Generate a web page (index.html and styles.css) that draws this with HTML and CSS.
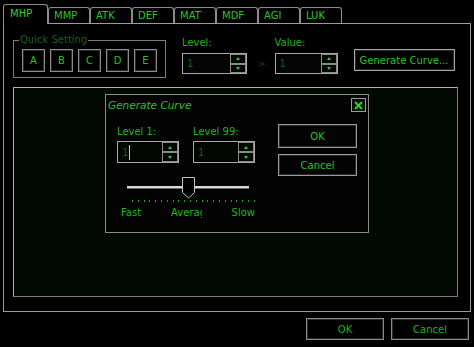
FILE: index.html
```html
<!DOCTYPE html>
<html>
<head>
  <meta name="viewport" content="width=device-width, initial-scale=1">
  <link rel="stylesheet" href="styles.css">
</head>
<body>
  <div class="tabs">
    <div class="tab active">MHP</div>
    <div class="tab">MMP</div>
    <div class="tab">ATK</div>
    <div class="tab">DEF</div>
    <div class="tab">MAT</div>
    <div class="tab">MDF</div>
    <div class="tab">AGI</div>
    <div class="tab">LUK</div>
  </div>

  <div class="panel">
    <div class="top-row">
      <div class="quick">
        <span class="quick-title">Quick Setting</span>
        <div class="btn sq">A</div>
        <div class="btn sq">B</div>
        <div class="btn sq">C</div>
        <div class="btn sq">D</div>
        <div class="btn sq">E</div>
      </div>

      <div class="field level-field">
        <label>Level:</label>
        <div class="spin">
          <span class="spin-val off">1</span>
          <div class="spin-btns"><span class="up"></span><span class="down"></span></div>
        </div>
      </div>

      <span class="arrow">&gt;</span>

      <div class="field value-field">
        <label>Value:</label>
        <div class="spin">
          <span class="spin-val off">1</span>
          <div class="spin-btns"><span class="up"></span><span class="down"></span></div>
        </div>
      </div>

      <div class="btn gen">Generate Curve...</div>
    </div>

    <div class="graph"></div>
  </div>

  <div class="footer">
    <div class="btn foot">OK</div>
    <div class="btn foot">Cancel</div>
  </div>

  <!-- modal dialog on top of the graph -->
  <div class="dialog">
    <div class="dlg-title">
      <span class="dlg-name">Generate Curve</span>
      <span class="close">
        <svg width="9" height="9" viewBox="0 0 9 9"><path d="M1 1 L8 8 M8 1 L1 8" stroke="#2bd42b" stroke-width="2"/></svg>
      </span>
    </div>
    <div class="dlg-body">
      <div class="dlg-left">
        <div class="dlg-fields">
          <div class="field">
            <label>Level 1:</label>
            <div class="spin">
              <span class="spin-val off">1<i class="caret"></i></span>
              <div class="spin-btns"><span class="up"></span><span class="down"></span></div>
            </div>
          </div>
          <div class="field">
            <label>Level 99:</label>
            <div class="spin">
              <span class="spin-val off">1</span>
              <div class="spin-btns"><span class="up"></span><span class="down"></span></div>
            </div>
          </div>
        </div>

        <div class="slider">
          <div class="track"></div>
          <svg class="handle" width="13" height="22" viewBox="0 0 13 22">
            <path d="M0.5 0.5 H12.5 V15.5 L6.5 21 L0.5 15.5 Z" fill="#000" stroke="#c4c4c4"/>
          </svg>
        </div>
        <div class="ticks"></div>
        <div class="speeds">
          <span class="fast">Fast</span>
          <span class="avg">Average</span>
          <span class="slow">Slow</span>
        </div>
      </div>

      <div class="dlg-btns">
        <div class="btn dlg-btn">OK</div>
        <div class="btn dlg-btn small">Cancel</div>
      </div>
    </div>
  </div>
</body>
</html>
```

FILE: styles.css
```css
body {
  margin: 0;
  background: #000;
  color: #25c425;
  font-family: "DejaVu Sans", Verdana, sans-serif;
  font-size: 10px;
  width: 474px;
  height: 347px;
  overflow: hidden;
  position: relative;
}

.tabs {
  display: flex;
  align-items: flex-end;
  height: 23px;
  padding-left: 3px;
  position: relative;
  z-index: 2;
}
.tab {
  width: 42px;
  height: 16px;
  box-sizing: border-box;
  border: 1px solid #8c8c8c;
  border-bottom: none;
  border-radius: 3px 3px 0 0;
  padding: 2px 0 0 5px;
  line-height: 12px;
}
.tab.active {
  width: 45px;
  height: 20px;
  margin-bottom: -1px;
  background: #000;
  padding: 3px 0 0 6px;
  color: #2ad42a;
}

.panel {
  margin-left: 3px;
  width: 468px;
  height: 289px;
  box-sizing: border-box;
  border: 1px solid #9c9c9c;
  padding: 12px 0 0 9px;
}

.top-row {
  display: flex;
  align-items: flex-start;
  height: 51px;
}

.btn {
  box-sizing: border-box;
  border: 1px solid #8a8a8a;
  box-shadow: inset 0 0 0 1px #2a2a2a;
  display: flex;
  align-items: center;
  justify-content: center;
  color: #25c425;
}

.quick {
  position: relative;
  margin-top: 4px;
  width: 153px;
  height: 38px;
  box-sizing: border-box;
  border: 1px solid #7c7c7c;
  display: flex;
  gap: 5px;
  padding: 8px 0 0 8px;
}
.quick-title {
  position: absolute;
  top: -7px;
  left: 5px;
  background: #000;
  padding: 0 1px;
  color: #1c5e1c;
  line-height: 12px;
}
.sq {
  width: 23px;
  height: 23px;
}

.field label {
  display: block;
  line-height: 13px;
  margin-bottom: 4px;
  color: #22b022;
}
.level-field { margin-left: 16px; width: 65px; }
.value-field { margin-left: 9px; width: 63px; }

.arrow {
  margin: 23px 0 0 11px;
  color: #1a4d1a;
  font-size: 9px;
}

.spin {
  display: flex;
  height: 21px;
  box-sizing: border-box;
  border: 1px solid #a8a8a8;
  background: #020502;
}
.spin-val {
  flex: 1;
  padding-left: 4px;
  line-height: 19px;
  display: flex;
  align-items: center;
}
.off { color: #1d5a1d; }
.caret {
  display: inline-block;
  width: 0;
  height: 15px;
  margin-left: 1px;
  border-left: 1px solid #c8c8c8;
}
.spin-btns {
  width: 16px;
  display: flex;
  flex-direction: column;
}
.spin-btns span {
  flex: 1;
  border: 1px solid #8a8a8a;
  display: flex;
  align-items: center;
  justify-content: center;
}
.spin-btns .up::before,
.spin-btns .down::before {
  content: "";
  border-left: 2px solid transparent;
  border-right: 2px solid transparent;
}
.spin-btns .up::before { border-bottom: 3px solid #2bcc2b; }
.spin-btns .down::before { border-top: 3px solid #2bcc2b; }

.gen {
  margin: 13px 0 0 16px;
  width: 101px;
  height: 22px;
  border-color: #a4a4a4;
}

.graph {
  width: 445px;
  height: 210px;
  box-sizing: border-box;
  border: 1px solid #7a7a7a;
  border-left-color: #b0b0b0;
  border-top-color: #b0b0b0;
  background: #020802;
}

.footer {
  display: flex;
  justify-content: flex-end;
  gap: 7px;
  margin-top: 6px;
  padding-right: 5px;
}
.foot {
  width: 78px;
  height: 22px;
  color: #20b020;
}

.dialog {
  position: absolute;
  left: 105px;
  top: 94px;
  width: 264px;
  height: 139px;
  box-sizing: border-box;
  border: 1px solid #8a8a8a;
  background: #030303;
  z-index: 3;
}
.dlg-title {
  display: flex;
  justify-content: space-between;
  align-items: flex-start;
  padding: 3px 2px 0 2px;
}
.dlg-name {
  font-style: italic;
  font-size: 10.5px;
  line-height: 14px;
  color: #25c425;
}
.close {
  width: 15px;
  height: 14px;
  box-sizing: border-box;
  border: 1px solid #9c9c9c;
  background: #0a0a0a;
  display: flex;
  align-items: center;
  justify-content: center;
}

.dlg-body {
  display: flex;
  padding: 13px 0 0 11px;
}
.dlg-left {
  width: 138px;
}
.dlg-fields {
  display: flex;
  gap: 14px;
}
.dlg-fields .field { width: 62px; }
.dlg-fields label { margin-bottom: 3px; }
.dlg-fields .spin { height: 22px; }

.slider {
  position: relative;
  margin: 14px 0 0 10px;
  width: 122px;
  height: 22px;
}
.track {
  position: absolute;
  left: 0;
  right: 0;
  top: 9px;
  height: 3px;
  box-sizing: border-box;
  border-top: 2px solid #d8d8d8;
  background: #6a6a6a;
}
.handle {
  position: absolute;
  left: 55px;
  top: 0;
}
.ticks {
  margin: 1px 0 0 15px;
  width: 123px;
  height: 2px;
  background: repeating-linear-gradient(90deg, #1fa21f 0 1px, transparent 1px 5.8px);
}
.speeds {
  display: flex;
  margin: 4px 0 0 4px;
  line-height: 13px;
  color: #22b422;
}
.avg {
  margin-left: 30px;
  width: 31px;
  overflow: hidden;
  white-space: nowrap;
}
.slow { margin-left: 30px; }

.dlg-btns {
  display: flex;
  flex-direction: column;
  gap: 6px;
  margin: -1px 0 0 23px;
}
.dlg-btn {
  width: 79px;
  height: 24px;
  border-color: #9a9a9a;
}
.dlg-btn.small { height: 22px; }
```
